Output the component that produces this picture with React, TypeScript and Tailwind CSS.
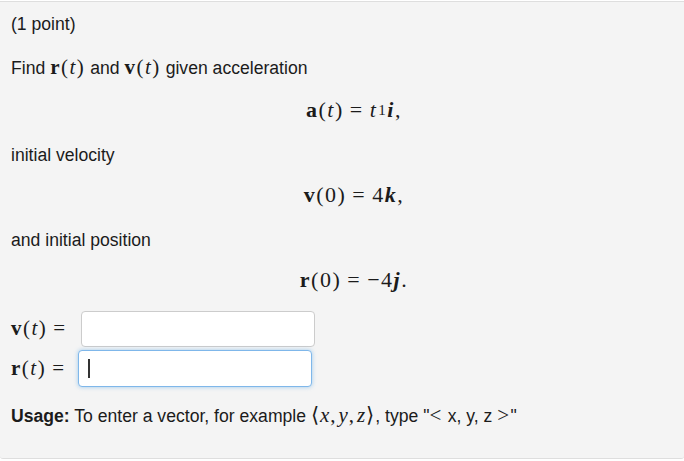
import React from 'react'

const M = ({ children, className = '' }: { children: React.ReactNode; className?: string }) => (
  <span className={`font-['Liberation_Serif',serif] whitespace-nowrap tracking-[1.5px] ${className}`}>{children}</span>
)

const B = ({ children }: { children: React.ReactNode }) => <span className="font-bold">{children}</span>
const I = ({ children }: { children: React.ReactNode }) => <span className="italic">{children}</span>
const BI = ({ children }: { children: React.ReactNode }) => <span className="font-bold italic">{children}</span>
const Eq = ({ children = '=' }: { children?: React.ReactNode }) => <span className="mx-[6px]">{children}</span>

function Display({ children }: { children: React.ReactNode }) {
  return (
    <div className="h-[22px] flex items-center justify-center pl-[24px]">
      <M className="text-[22px] leading-none">{children}</M>
    </div>
  )
}

export default function App() {
  return (
    <div className="w-[684px] h-[461px] bg-white pt-px font-['Liberation_Sans',Arial,sans-serif] text-[17.6px] text-[#1b1b1b]">
      <div className="h-[458px] bg-[#f4f4f4] border-t border-b border-[#dedede] rounded-b-[3px] px-[11px] flex flex-col">
        <div className="h-[20px] mt-[12px] flex items-center">(1 point)</div>

        <div className="h-[20px] mt-[24px] flex items-center whitespace-pre">
          <span>Find </span>
          <M className="text-[21px]"><B>r</B>(<I>t</I>)</M>
          <span> and </span>
          <M className="text-[21px]"><B>v</B>(<I>t</I>)</M>
          <span> given acceleration</span>
        </div>

        <div className="mt-[21px]">
          <Display>
            <B>a</B>(<I>t</I>)<Eq /><I>t</I><sup className="text-[15px] relative -top-[2px] ml-px">1</sup><BI>i</BI>,
          </Display>
        </div>

        <div className="h-[20px] mt-[24px] flex items-center">initial velocity</div>

        <div className="mt-[19px]">
          <Display>
            <B>v</B>(0)<Eq />4<BI>k</BI>,
          </Display>
        </div>

        <div className="h-[20px] mt-[24px] flex items-center">and initial position</div>

        <div className="mt-[19px]">
          <Display>
            <B>r</B>(0)<Eq />−4<BI>j</BI>.
          </Display>
        </div>

        <div className="mt-[20px] flex items-center h-[36px]">
          <M className="text-[21px] w-[70px] shrink-0"><B>v</B>(<I>t</I>)<span className="ml-[6px]">=</span></M>
          <input className="w-[234px] h-[36px] bg-white border border-[#cccccc] rounded-[4px] outline-none" />
        </div>
        <div className="mt-[3px] flex items-center h-[37px]">
          <M className="text-[21px] w-[67px] shrink-0"><B>r</B>(<I>t</I>)<span className="ml-[6px]">=</span></M>
          <div className="w-[234px] h-[37px] bg-white border border-[#7fb7ea] rounded-[4px] shadow-[0_0_4px_rgba(102,175,233,0.6)] flex items-center pl-[9px]">
            <div className="w-[2px] h-[19px] bg-[#333]" />
          </div>
        </div>

        <div className="h-[20px] mt-[19px] flex items-center whitespace-pre">
          <span className="font-bold">Usage:</span>
          <span> To enter a vector, for example </span>
          <M className="text-[21px] tracking-[1px]">⟨<I>x</I>,<span className="ml-[2px]" /><I>y</I>,<span className="ml-[2px]" /><I>z</I>⟩</M>
          <span>, type "</span>
          <M className="text-[21px]">&lt;</M>
          <span> x, y, z </span>
          <M className="text-[21px]">&gt;</M>
          <span>"</span>
        </div>
      </div>
    </div>
  )
}
